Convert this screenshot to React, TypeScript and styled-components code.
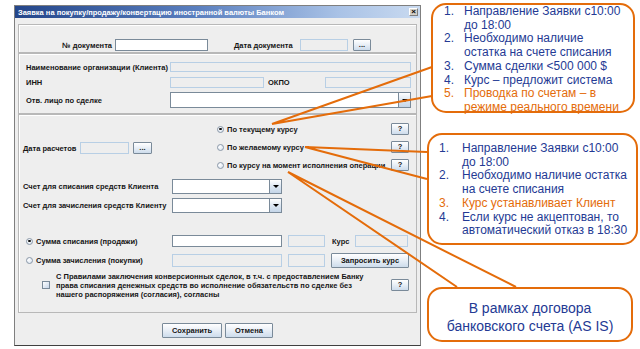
import styled, { createGlobalStyle } from "styled-components"

const GlobalStyle = createGlobalStyle`
    html, body {
        margin: 0;
        padding: 0;
        background: #ffffff;
    }
    body {
        width: 640px;
        height: 349px;
        overflow: hidden;
        font-family: "Liberation Sans", Arial, sans-serif;
    }
`

const Page = styled.div`
    position: relative;
    width: 640px;
    height: 349px;
    box-sizing: border-box;
    padding: 5px 0 0 14px;
`

const Window = styled.div`
    width: 407px;
    height: 341px;
    box-sizing: border-box;
    border: 1px solid #7f7f7f;
    border-bottom-color: #404040;
    background: #eeeeee;
    display: flex;
    flex-direction: column;
    font-size: 7.5px;
    font-weight: bold;
    color: #151515;
`

const TitleBar = styled.div`
    height: 12px;
    flex: none;
    display: flex;
    align-items: center;
    justify-content: space-between;
    padding: 0 2px 0 3px;
    background: linear-gradient(90deg, #24468a 0%, #5a7fbf 45%, #a9c2e6 80%, #c9daf0 100%);
    color: #ffffff;
    white-space: nowrap;
`

const CloseBox = styled.span`
    width: 9px;
    height: 8px;
    box-sizing: border-box;
    border: 1px solid #7f7f7f;
    border-top-color: #ffffff;
    border-left-color: #ffffff;
    background: #d4d0c8;
    color: #000;
    font-size: 8px;
    line-height: 6px;
    text-align: center;
`

const Body = styled.div`
    flex: 1;
    display: flex;
    flex-direction: column;
    padding: 6px 3px 0 3px;
`

const Panel = styled.div<{ $h: number }>`
    height: ${p => p.$h}px;
    flex: none;
    box-sizing: border-box;
    border: 1px solid #b8b8b8;
    box-shadow: inset 1px 1px 0 #ffffff;
`

const DocPanel = styled(Panel)`
    display: flex;
    align-items: center;
    padding-top: 13px;
`

const OrgPanel = styled(Panel)`
    display: grid;
    grid-template-columns: 144px 94px 61px 86px;
    grid-template-rows: 10px 11px 16px;
    row-gap: 4.5px;
    align-items: center;
    padding: 8px 0 0 7px;
`

const MainPanel = styled(Panel)`
    display: flex;
    flex-direction: column;
    padding: 5px 7px 0 4px;
`

const Label = styled.span<{ $w?: number; $ml?: number; $right?: boolean }>`
    flex: none;
    width: ${p => (p.$w ? `${p.$w}px` : "auto")};
    margin-left: ${p => p.$ml ?? 0}px;
    text-align: ${p => (p.$right ? "right" : "left")};
    white-space: nowrap;
`

const Field = styled.div<{ $w?: number; $h?: number; $off?: boolean; $ml?: number; $span?: boolean }>`
    flex: none;
    width: ${p => (p.$w ? `${p.$w}px` : "auto")};
    height: ${p => p.$h ?? 12}px;
    margin-left: ${p => p.$ml ?? 0}px;
    box-sizing: border-box;
    background: ${p => (p.$off ? "#eeeeee" : "#ffffff")};
    border: 1px solid ${p => (p.$off ? "#b8cfe5" : "#7a8a99")};
    grid-column: ${p => (p.$span ? "2 / -1" : "auto")};
`

const Combo = styled.div<{ $w?: number; $h: number; $span?: boolean }>`
    flex: none;
    width: ${p => (p.$w ? `${p.$w}px` : "auto")};
    height: ${p => p.$h}px;
    box-sizing: border-box;
    background: #ffffff;
    border: 1px solid #7a8a99;
    display: flex;
    justify-content: flex-end;
    grid-column: ${p => (p.$span ? "2 / -1" : "auto")};
`

const ComboArrow = styled.span`
    width: 11px;
    border-left: 1px solid #7a8a99;
    background: linear-gradient(#ffffff, #dde7f2 50%, #c4d5e8);
    display: flex;
    align-items: center;
    justify-content: center;

    &::before {
        content: "";
        border-left: 3px solid transparent;
        border-right: 3px solid transparent;
        border-top: 3px solid #000000;
    }
`

const Btn = styled.button<{ $w: number; $h?: number; $ml?: number }>`
    flex: none;
    width: ${p => p.$w}px;
    height: ${p => p.$h ?? 12}px;
    margin-left: ${p => p.$ml ?? 0}px;
    padding: 0;
    box-sizing: border-box;
    border: 1px solid #7a8a99;
    border-radius: 1px;
    background: linear-gradient(#ffffff 0%, #edf2f8 40%, #cddcec 100%);
    font: bold 7.5px "Liberation Sans", Arial, sans-serif;
    color: #151515;
    line-height: 1;
`

const Row = styled.div<{ $h: number; $mt?: number }>`
    display: flex;
    align-items: center;
    height: ${p => p.$h}px;
    margin-top: ${p => p.$mt ?? 0}px;
    flex: none;
`

const RateBlock = styled.div`
    display: flex;
    height: 54px;
    flex: none;
`

const RateLeft = styled.div`
    width: 194px;
    flex: none;
    display: flex;
    align-items: center;
    padding-top: 2px;
    box-sizing: border-box;
`

const RateRight = styled.div`
    flex: 1;
    display: flex;
    flex-direction: column;
`

const RateRow = styled.div`
    height: 18px;
    display: flex;
    align-items: center;
    justify-content: space-between;
`

const Option = styled.span<{ $w?: number }>`
    display: flex;
    align-items: center;
    gap: 3px;
    flex: none;
    width: ${p => (p.$w ? `${p.$w}px` : "auto")};
    box-sizing: border-box;
    white-space: nowrap;
`

const Radio = styled.span<{ $on?: boolean; $ml?: number }>`
    position: relative;
    width: 7px;
    height: 7px;
    flex: none;
    margin-left: ${p => p.$ml ?? 0}px;
    box-sizing: border-box;
    border-radius: 50%;
    border: 1px solid #8a98a8;
    background: radial-gradient(circle at 35% 35%, #ffffff, #d4e0ee);

    &::after {
        content: "";
        display: ${p => (p.$on ? "block" : "none")};
        position: absolute;
        inset: 1.2px;
        border-radius: 50%;
        background: #111111;
    }
`

const Check = styled.span`
    width: 8px;
    height: 8px;
    flex: none;
    margin-left: 19px;
    box-sizing: border-box;
    border: 1px solid #7a8a99;
    background: linear-gradient(135deg, #ffffff, #c6d6e9);
`

const Agreement = styled.div`
    display: flex;
    align-items: center;
    height: 26px;
    margin-top: 4px;
    flex: none;
`

const AgreementText = styled.p`
    margin: 0 0 0 6px;
    line-height: 9px;
    white-space: nowrap;
    flex: 1;
`

const Footer = styled.div`
    flex: 1;
    display: flex;
    justify-content: center;
    align-items: flex-start;
    gap: 3px;
    padding-top: 10px;
`

const Wedges = styled.svg`
    position: absolute;
    left: 0;
    top: 0;
    pointer-events: none;
`

const Callout = styled.div<{ $x: number; $y: number; $w: number; $h: number }>`
    position: absolute;
    left: ${p => p.$x}px;
    top: ${p => p.$y}px;
    width: ${p => p.$w}px;
    height: ${p => p.$h}px;
    box-sizing: border-box;
    border: 2px solid #e46c0a;
    border-radius: 15px;
    background: #ffffff;
    font-size: 12px;
    color: #243a94;
`

const List = styled.ol<{ $pt: number; $pl: number }>`
    list-style: none;
    margin: 0;
    padding: ${p => p.$pt}px 0 0 ${p => p.$pl}px;
`

const Item = styled.li<{ $accent?: boolean; $num: number }>`
    display: flex;
    line-height: 13.7px;
    color: ${p => (p.$accent ? "#e46c0a" : "#243a94")};
    white-space: nowrap;

    & > span:first-child {
        flex: none;
        width: ${p => p.$num}px;
    }
`

const CenterText = styled.div`
    padding-top: 10px;
    text-align: center;
    font-size: 14px;
    line-height: 18px;
`

const points = [
    "432,67 272,124 432,96",
    "427,152 305,147 427,179",
    "457,287 288,172 516,287",
]

function App() {
    return (
        <>
            <GlobalStyle />
            <Page>
                <Window>
                    <TitleBar>
                        <span>Заявка на покупку/продажу/конвертацию иностранной валюты Банком</span>
                        <CloseBox>×</CloseBox>
                    </TitleBar>
                    <Body>
                        <DocPanel $h={29}>
                            <Label $w={93} $right>№ документа</Label>
                            <Field $w={93} $ml={3} />
                            <Label $w={60} $ml={26}>Дата документа</Label>
                            <Field $w={48} $ml={6} $off />
                            <Btn $w={18} $ml={5}>...</Btn>
                        </DocPanel>

                        <OrgPanel $h={61}>
                            <Label>Наименование организации (Клиента)</Label>
                            <Field $h={10} $off $span />
                            <Label>ИНН</Label>
                            <Field $h={11} $off />
                            <Label $ml={4}>ОКПО</Label>
                            <Field $h={11} $off />
                            <Label>Отв. лицо по сделке</Label>
                            <Combo $h={16} $span><ComboArrow /></Combo>
                        </OrgPanel>

                        <MainPanel $h={199}>
                            <RateBlock>
                                <RateLeft>
                                    <Label $w={57}>Дата расчетов</Label>
                                    <Field $w={49} $off />
                                    <Btn $w={19} $ml={4}>...</Btn>
                                </RateLeft>
                                <RateRight>
                                    <RateRow>
                                        <Option><Radio $on />По текущему курсу</Option>
                                        <Btn $w={18}>?</Btn>
                                    </RateRow>
                                    <RateRow>
                                        <Option><Radio />По желаемому курсу</Option>
                                        <Btn $w={18}>?</Btn>
                                    </RateRow>
                                    <RateRow>
                                        <Option><Radio />По курсу на момент исполнения операции</Option>
                                        <Btn $w={18}>?</Btn>
                                    </RateRow>
                                </RateRight>
                            </RateBlock>

                            <Row $h={15} $mt={5}>
                                <Label $w={149}>Счет для списания средств Клиента</Label>
                                <Combo $w={110} $h={15}><ComboArrow /></Combo>
                            </Row>
                            <Row $h={15} $mt={4}>
                                <Label $w={149}>Счет для зачисления средств Клиенту</Label>
                                <Combo $w={110} $h={15}><ComboArrow /></Combo>
                            </Row>

                            <Row $h={12} $mt={22}>
                                <Option $w={149}><Radio $on $ml={3} />Сумма списания (продажи)</Option>
                                <Field $w={110} />
                                <Field $w={37} $ml={6} $off />
                                <Label $w={23} $ml={7}>Курс</Label>
                                <Field $w={53} $off />
                            </Row>
                            <Row $h={15} $mt={6}>
                                <Option $w={149}><Radio $ml={3} />Сумма зачисления (покупки)</Option>
                                <Field $w={110} $h={13} $off />
                                <Field $w={37} $h={13} $ml={6} $off />
                                <Btn $w={78} $h={15} $ml={6}>Запросить курс</Btn>
                            </Row>

                            <Agreement>
                                <Check />
                                <AgreementText>
                                    С Правилами заключения конверсионных сделок, в т.ч. с предоставлением Банку<br />
                                    права списания денежных средств во исполнение обязательств по сделке без<br />
                                    нашего распоряжения (согласия), согласны
                                </AgreementText>
                                <Btn $w={18} $ml={4}>?</Btn>
                            </Agreement>
                        </MainPanel>

                        <Footer>
                            <Btn $w={60} $h={15}>Сохранить</Btn>
                            <Btn $w={48} $h={15}>Отмена</Btn>
                        </Footer>
                    </Body>
                </Window>

                <Wedges width="640" height="349" viewBox="0 0 640 349">
                    {points.map(pts => (
                        <polyline key={pts} points={pts} fill="none" stroke="#e46c0a" strokeWidth="2" strokeLinejoin="miter" />
                    ))}
                </Wedges>

                <Callout $x={431} $y={3} $w={204} $h={110}>
                    <List $pt={0} $pl={11}>
                        <Item $num={20}><span>1.</span><span>Направление Заявки с10:00<br />до 18:00</span></Item>
                        <Item $num={20}><span>2.</span><span>Необходимо наличие<br />остатка на счете списания</span></Item>
                        <Item $num={20}><span>3.</span><span>Сумма сделки &lt;500 000 $</span></Item>
                        <Item $num={20}><span>4.</span><span>Курс – предложит система</span></Item>
                        <Item $num={20} $accent><span>5.</span><span>Проводка по счетам – в<br />режиме реального времени</span></Item>
                    </List>
                </Callout>

                <Callout $x={427} $y={133} $w={211} $h={112}>
                    <List $pt={7} $pl={10}>
                        <Item $num={23}><span>1.</span><span>Направление Заявки с10:00<br />до 18:00</span></Item>
                        <Item $num={23}><span>2.</span><span>Необходимо наличие  остатка<br />на счете списания</span></Item>
                        <Item $num={23} $accent><span>3.</span><span>Курс устанавливает Клиент</span></Item>
                        <Item $num={23}><span>4.</span><span>Если курс не акцептован, то<br />автоматический отказ в 18:30</span></Item>
                    </List>
                </Callout>

                <Callout $x={427} $y={287} $w={206} $h={55}>
                    <CenterText>
                        В рамках договора<br />
                        банковского счета (AS IS)
                    </CenterText>
                </Callout>
            </Page>
        </>
    )
}

export default App
